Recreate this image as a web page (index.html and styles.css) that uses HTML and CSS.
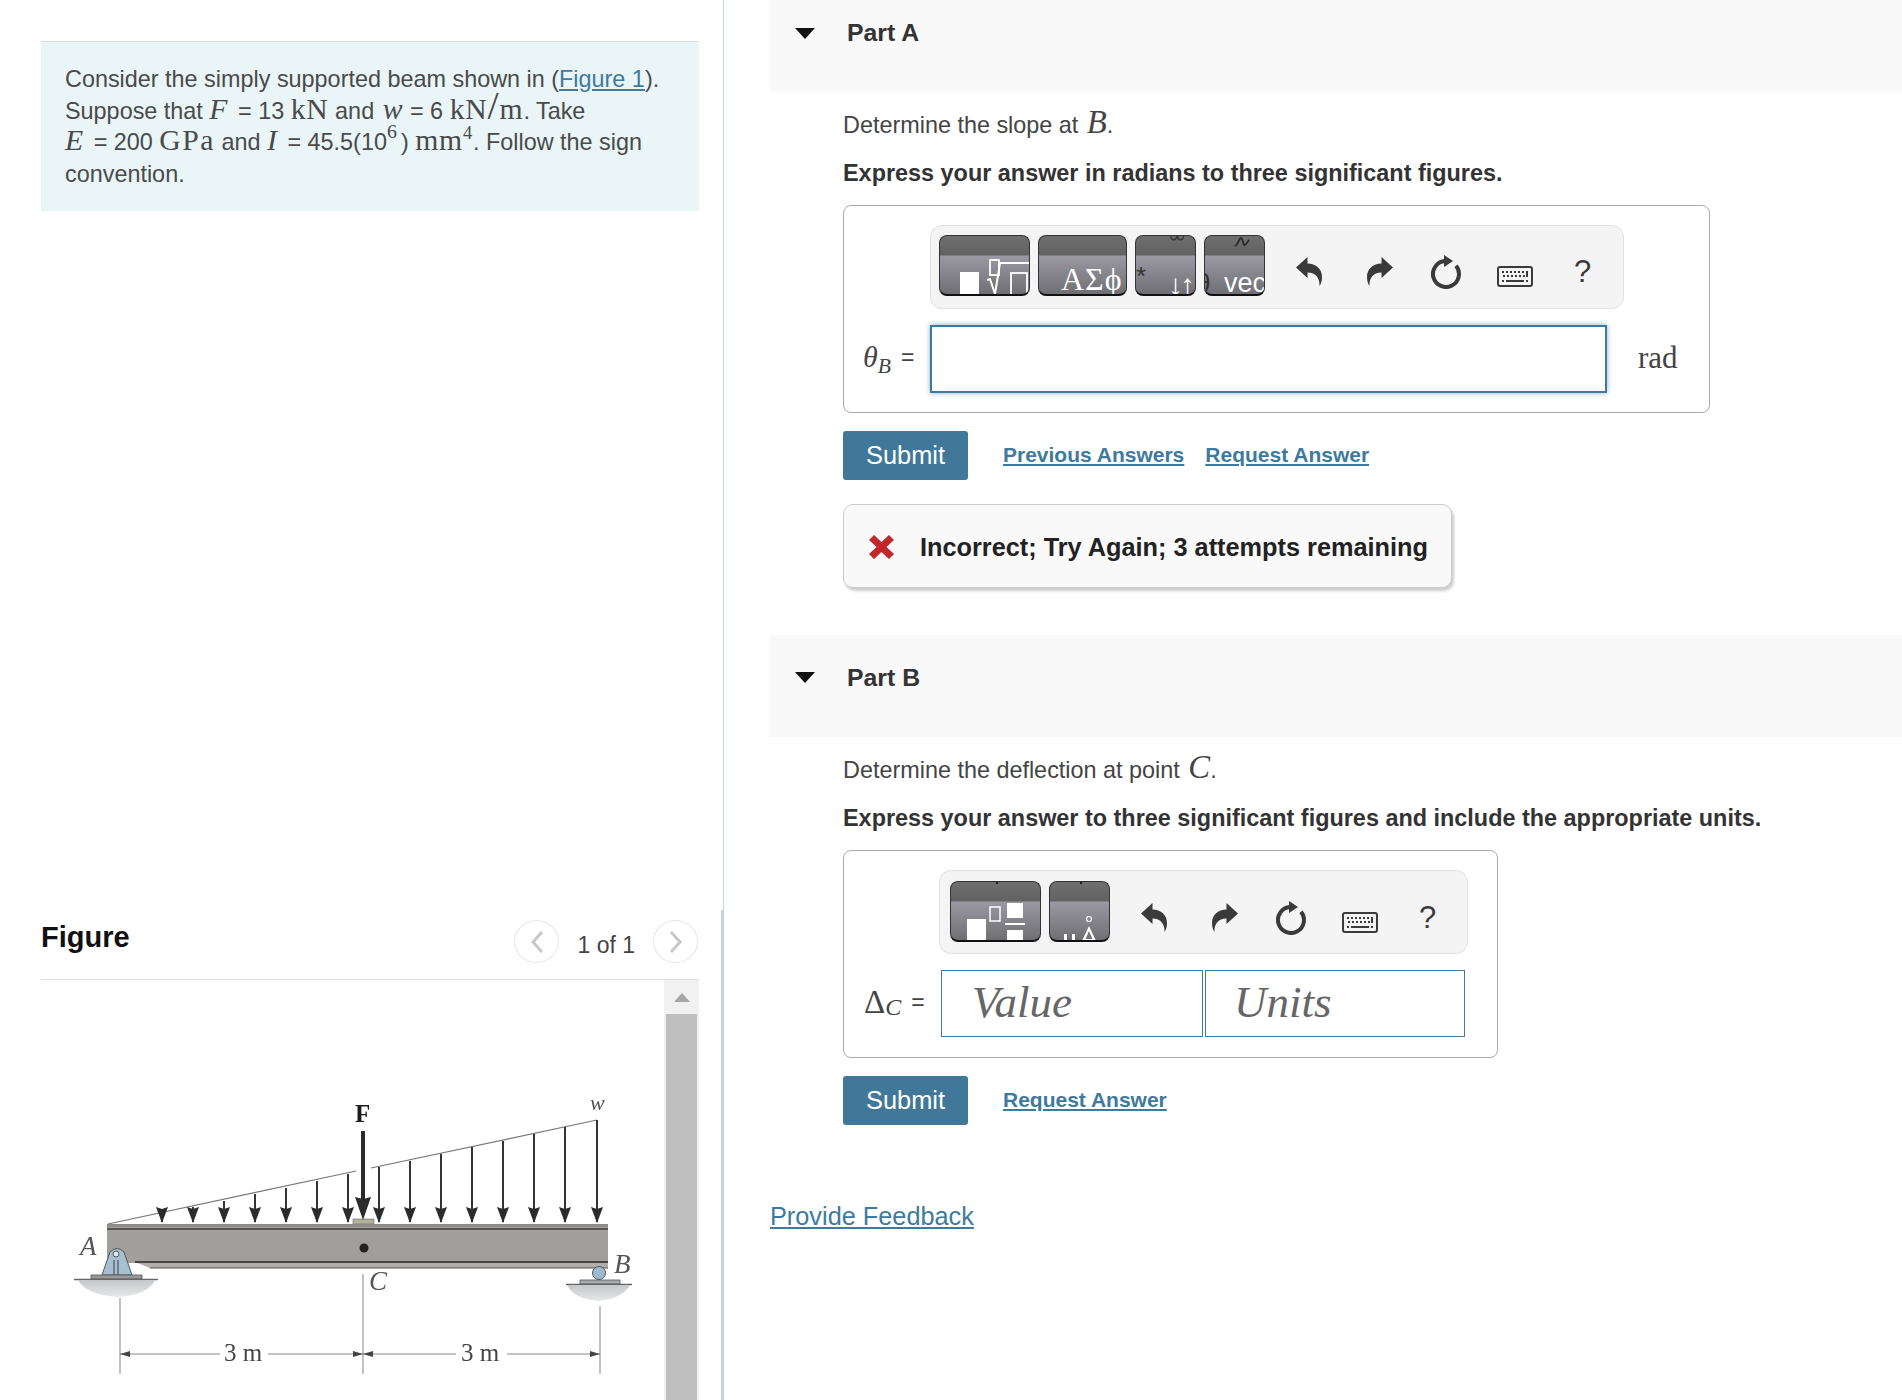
FILE: index.html
```html
<!DOCTYPE html>
<html lang="en">
<head>
<meta charset="utf-8">
<title>Beam problem</title>
<link rel="stylesheet" href="styles.css">
</head>
<body>
<svg class="defs" width="0" height="0" aria-hidden="true">
  <defs>
    <symbol id="i-undo" viewBox="0 0 26 29"><path d="M0 10.500 11.500 0v6.500C20 6.500 26 12 26 20c0 4-1 7-2.500 9C24 21.500 20 15.500 11.500 15.500V21Z"/></symbol>
    <symbol id="i-redo" viewBox="0 0 26 29"><path d="M26 10.500 14.500 0v6.500C6 6.500 0 12 0 20c0 4 1 7 2.500 9C2 21.500 6 15.500 14.500 15.500V21Z"/></symbol>
    <symbol id="i-reload" viewBox="0 0 31 34"><path d="M14 6A13 13 0 1 0 25 10.700" fill="none" stroke="currentColor" stroke-width="4"/><path d="M13 0 22 6 13 12Z"/></symbol>
    <symbol id="i-kbd" viewBox="0 0 36 21"><rect x="1" y="1" width="34" height="19" rx="2" fill="none" stroke="currentColor" stroke-width="2"/><path d="M5 5h2v2H5zM9 5h2v2H9zM13 5h2v2h-2zM17 5h2v2h-2zM21 5h2v2h-2zM25 5h2v2h-2zM29 5h2v6h-2zM6 9h2v2H6zM10 9h2v2h-2zM14 9h2v2h-2zM18 9h2v2h-2zM22 9h2v2h-2zM26 9h2v2h-2zM5 14h2v2H5zM9 14h18v2H9zM29 14h2v2h-2z"/></symbol>
  </defs>
</svg>
<div class="page">
  <aside class="left">
    <section class="intro">
      <p>Consider the simply supported beam shown in (<a href="#">Figure 1</a>).<br>
      Suppose that <i class="m mi gap">F</i> = 13 <span class="m up">kN</span> and <i class="m mi gap-s">w</i> = 6 <span class="m up">kN<span class="slash">/</span>m</span>. Take<br>
      <i class="m mi gap">E</i> = 200 <span class="m up up-w">GPa</span> and <i class="m mi gap">I</i> = 45.5(10<sup class="sup-m">6</sup>) <span class="m up">mm<sup>4</sup></span>. Follow the sign convention.</p>
    </section>
    <section class="figure">
      <header class="fig-head">
        <h2>Figure</h2>
        <nav class="pager">
          <span class="circle"><svg width="14" height="24" viewBox="0 0 14 24"><path d="M12 2 3 12l9 10" fill="none" stroke="#c8c8c8" stroke-width="3"/></svg></span>
          <span class="count">1 of 1</span>
          <span class="circle"><svg width="14" height="24" viewBox="0 0 14 24"><path d="M2 2l9 10-9 10" fill="none" stroke="#c8c8c8" stroke-width="3"/></svg></span>
        </nav>
      </header>
      <div class="fig-view">
        <div class="fig-canvas">
          <svg class="beam" width="623" height="420" viewBox="41 980 623 420">
            <defs>
              <marker id="ah" viewBox="0 0 12 16" refX="6" refY="15" markerWidth="12" markerHeight="16" orient="0" markerUnits="userSpaceOnUse"><path d="M0 0 6 2 12 0 6 16Z" fill="#2b2b2b"/></marker>
              <linearGradient id="gr" x1="0" y1="0" x2="0" y2="1"><stop offset="0" stop-color="#c4c8ca"/><stop offset="1" stop-color="#e6e8e8"/></linearGradient>
            </defs>
            <path d="M108 1224 356 1171M371 1168 597 1120" stroke="#777" stroke-width="1.200" fill="none"/>
            <g stroke="#333" stroke-width="2" fill="none">
              <path marker-end="url(#ah)" d="M162 1214V1222"/><path marker-end="url(#ah)" d="M193 1207V1222"/><path marker-end="url(#ah)" d="M224 1201V1222"/><path marker-end="url(#ah)" d="M255 1194V1222"/><path marker-end="url(#ah)" d="M286 1188V1222"/><path marker-end="url(#ah)" d="M317 1181V1222"/><path marker-end="url(#ah)" d="M348 1174V1222"/><path marker-end="url(#ah)" d="M379 1167V1222"/><path marker-end="url(#ah)" d="M410 1161V1222"/><path marker-end="url(#ah)" d="M441 1154V1222"/><path marker-end="url(#ah)" d="M472 1147V1222"/><path marker-end="url(#ah)" d="M503 1141V1222"/><path marker-end="url(#ah)" d="M534 1134V1222"/><path marker-end="url(#ah)" d="M565 1127V1222"/><path marker-end="url(#ah)" d="M597 1120V1222"/>
            </g>
            <rect x="353" y="1219" width="21" height="5" fill="#b5b09a" stroke="#666" stroke-width=".6"/>
            <path d="M363 1131V1200" stroke="#2b2b2b" stroke-width="4"/>
            <path d="M355 1197 363 1199 371 1197 363 1220Z" fill="#2b2b2b"/>
            <rect x="107" y="1224" width="501" height="39" fill="#a29e9c"/>
            <rect x="107" y="1224" width="501" height="3" fill="#8f8b88"/>
            <rect x="107" y="1228" width="501" height="2" fill="#5a5653"/>
            <path d="M135 1262 150 1268H608V1262Z" fill="#b0adab"/>
            <rect x="135" y="1261" width="473" height="2" fill="#4a4644"/>
            <path d="M150 1268H608" stroke="#555"/>
            <circle cx="364" cy="1248" r="4.500" fill="#222"/>
            <path d="M102 1275 110 1252Q117 1245 124 1252L132 1275Z" fill="#a6c0d2" stroke="#555"/>
            <circle cx="116" cy="1254" r="3" fill="#dde8ef" stroke="#555"/>
            <path d="M114 1260V1275M118 1260V1275" stroke="#556" stroke-width="1.200"/>
            <rect x="91" y="1275" width="51" height="4" fill="#999" stroke="#555" stroke-width=".8"/>
            <path d="M74 1279.500H158" stroke="#666" stroke-width="1.500"/>
            <path d="M78 1280H155Q148 1295 118 1297 86 1295 78 1280Z" fill="url(#gr)"/>
            <circle cx="599" cy="1273" r="6.500" fill="#9cbad0" stroke="#555"/>
            <rect x="580" y="1280" width="40" height="4" fill="#aaa" stroke="#555" stroke-width=".8"/>
            <path d="M566 1284.500H632" stroke="#666" stroke-width="1.500"/>
            <path d="M567 1285H630Q622 1299 598 1301 574 1299 567 1285Z" fill="url(#gr)"/>
            <path d="M120 1298V1374M363 1274V1374M600 1306V1374" stroke="#999" stroke-width="1.200"/>
            <path d="M120 1354H220M268 1354H363M363 1354H456M507 1354H600" stroke="#888" stroke-width="1.200"/>
            <path d="M120 1354 130 1351V1357ZM363 1354 353 1351V1357ZM363 1354 373 1351V1357ZM600 1354 590 1351V1357Z" fill="#444"/>
            <g class="lbl">
              <text x="224" y="1361">3 m</text>
              <text x="461" y="1361">3 m</text>
              <text x="80" y="1255" class="it">A</text>
              <text x="369" y="1290" class="it">C</text>
              <text x="614" y="1273" class="it">B</text>
              <text x="590" y="1110" class="it sm">w</text>
              <text x="355" y="1122" class="bf">F</text>
            </g>
          </svg>
        </div>
        <div class="scrollbar">
          <div class="scroll-up"><span class="tri"></span></div>
          <div class="thumb"></div>
        </div>
      </div>
    </section>
  </aside>
  <main class="right">
    <section class="part">
      <header class="part-head part-head-a"><span class="caret"></span><h3>Part A</h3></header>
      <div class="part-body">
        <p class="q">Determine the slope at <i class="m mi">B</i>.</p>
        <p class="ex">Express your answer in radians to three significant figures.</p>
        <div class="answer answer-a">
          <div class="toolbar toolbar-a">
            <span class="tbtn w91">
              <span class="g sq"></span>
              <svg class="g rad" width="44" height="38" viewBox="0 0 44 38"><path d="M0 22l3-1 5 15 5-31h31" fill="none" stroke="#fff" stroke-width="2"/><rect x="3" y="2" width="9" height="15" fill="none" stroke="#fff" stroke-width="1.800"/><rect x="24" y="15" width="16" height="24" fill="none" stroke="#fff" stroke-width="1.800"/></svg>
            </span>
            <span class="tbtn w89"><span class="g greek">ΑΣϕ</span></span>
            <span class="tbtn w61">
              <span class="g top-inf">∞</span>
              <span class="g star">*</span>
              <span class="g arrows">↓↑</span>
            </span>
            <span class="tbtn w61">
              <svg class="g top-wave" width="16" height="10" viewBox="0 0 16 10"><path d="M1 9C4 8 5 1 7 1S9 9 11 8 14 4 15 3" fill="none" stroke="#2a2a2a" stroke-width="1.800"/></svg>
              <span class="g theta">θ</span>
              <span class="g vec">vec</span>
            </span>
            <svg class="ic ic-undo"><use href="#i-undo"/></svg>
            <svg class="ic ic-redo"><use href="#i-redo"/></svg>
            <svg class="ic ic-reload"><use href="#i-reload"/></svg>
            <svg class="ic ic-kbd"><use href="#i-kbd"/></svg>
            <span class="help">?</span>
          </div>
          <div class="row">
            <span class="lab lab-a"><i class="m mi">θ<sub>B</sub></i><span class="eq">=</span></span>
            <div class="focus-input"></div>
            <span class="m unit">rad</span>
          </div>
        </div>
        <div class="actions">
          <button class="submit">Submit</button>
          <a class="act" href="#">Previous Answers</a>
          <a class="act" href="#">Request Answer</a>
        </div>
        <div class="fb">
          <svg width="25" height="24" viewBox="0 0 25 24"><path d="M5 0 12.500 7 20 0 25 5 17.500 12 25 19 20 24 12.500 17 5 24 0 19 7.500 12 0 5Z" fill="#c0282b"/></svg>
          <strong>Incorrect; Try Again; 3 attempts remaining</strong>
        </div>
      </div>
    </section>
    <section class="part part-b">
      <header class="part-head"><span class="caret"></span><h3>Part B</h3></header>
      <div class="part-body">
        <p class="q">Determine the deflection at point <i class="m mi">C</i>.</p>
        <p class="ex">Express your answer to three significant figures and include the appropriate units.</p>
        <div class="answer answer-b">
          <div class="toolbar toolbar-b">
            <span class="tbtn w91">
              <span class="tick"></span>
              <svg class="g frac" width="60" height="40" viewBox="0 0 60 40"><path d="M0 17h19v23H0zM40 1h16v15H40zM40 28h16v12H40zM38 21h20v2H38z" fill="#fff"/><rect x="23" y="5" width="10" height="14" fill="none" stroke="#fff" stroke-width="1.500"/></svg>
            </span>
            <span class="tbtn w61">
              <span class="tick"></span>
              <svg class="g ang" width="34" height="25" viewBox="0 0 34 25"><path d="M0 18h3v7H0zM8 18h3v7H8zM25 10 32 25H18ZM25 15l-3.500 8h7Z" fill="#fff" fill-rule="evenodd"/><circle cx="25" cy="3" r="2.500" fill="none" stroke="#fff" stroke-width="1.200"/></svg>
            </span>
            <svg class="ic ic-undo"><use href="#i-undo"/></svg>
            <svg class="ic ic-redo"><use href="#i-redo"/></svg>
            <svg class="ic ic-reload"><use href="#i-reload"/></svg>
            <svg class="ic ic-kbd"><use href="#i-kbd"/></svg>
            <span class="help">?</span>
          </div>
          <div class="row row-b">
            <span class="lab lab-b"><span class="delta">Δ</span><i class="delta-sub">C</i><span class="eq">=</span></span>
            <div class="field">Value</div>
            <div class="field field-2">Units</div>
          </div>
        </div>
        <div class="actions">
          <button class="submit">Submit</button>
          <a class="act" href="#">Request Answer</a>
        </div>
      </div>
    </section>
    <a class="feedback" href="#">Provide Feedback</a>
  </main>
</div>
</body>
</html>
```

FILE: styles.css
```css
* { box-sizing: border-box; }
html, body { margin: 0; padding: 0; background: #fff; }
body { font-family: "Liberation Sans", Arial, sans-serif; color: #444; height: 1400px; overflow: hidden; }
.defs { position: absolute; }
p, h2, h3 { margin: 0; }
a { color: #3e7a9d; }
.m { font-family: "Liberation Serif", "Times New Roman", serif; font-size: 1.27em; line-height: 0; }
.mi { font-style: italic; }
.gap { margin-right: 4px; }
.gap-s { margin-left: 2px; margin-right: 1px; }
.up { letter-spacing: .8px; }
.up-w { letter-spacing: 1.500px; }
.slash { font-size: 1.35em; font-weight: normal; line-height: 0; }
sup { font-size: .62em; line-height: 0; vertical-align: .62em; }
.sup-m { font-family: "Liberation Serif", serif; font-size: .85em; margin-right: 4px; }
sub { font-size: .72em; line-height: 0; vertical-align: -.3em; }

.page { display: flex; height: 1400px; }

.left { position: relative; width: 724px; flex: none; border-right: 1px solid #c5d3e2; padding: 41px 25px 0 41px; display: flex; flex-direction: column; }
.left::after { content: ""; position: absolute; right: 0; top: 910px; bottom: 0; width: 2px; background: #c5d3e2; }
.intro { width: 658px; height: 170px; background: #e9f5f6; border-top: 1px solid #ddd; padding: 22px 24px 0; font-size: 23.400px; line-height: 31.500px; color: #4a4a4a; }
.intro a { color: #3e7a9d; }

.figure { margin-top: 709px; width: 658px; }
.fig-head { display: flex; justify-content: space-between; align-items: flex-start; height: 60px; border-bottom: 1px solid #ddd; }
.fig-head h2 { font-size: 29px; line-height: 34px; color: #111; font-weight: bold; }
.pager { display: flex; align-items: flex-start; margin-right: 1px; }
.circle { width: 45px; height: 43px; border: 1px solid #e6e6e6; border-radius: 50%; display: flex; align-items: center; justify-content: center; }
.count { font-size: 23px; line-height: 30px; margin: 10px 18px 0; color: #444; }

.fig-view { display: flex; height: 420px; overflow: hidden; }
.fig-canvas { width: 623px; flex: none; filter: blur(.5px); }
.beam { display: block; }
.lbl text { font-family: "Liberation Serif", serif; font-size: 25px; fill: #444; }
.lbl .it { font-style: italic; font-size: 27px; fill: #555; }
.lbl .sm { font-size: 22px; }
.lbl .bf { font-weight: bold; font-size: 25px; fill: #1c1c1c; }
.scrollbar { width: 35px; background: #f1f1f1; padding: 0 2px; }
.scroll-up { height: 34px; display: flex; justify-content: center; padding-top: 13px; }
.tri { width: 0; height: 0; border-left: 8px solid transparent; border-right: 8px solid transparent; border-bottom: 9px solid #a6a6a6; }
.thumb { height: 400px; background: #bfbfbf; }

.right { flex: 1; padding-left: 46px; min-width: 0; }
.part-head { height: 102px; background: #f9f9f9; display: flex; align-items: center; padding-left: 25px; }
.part-head-a { height: 92px; }
.part-head h3 { font-size: 24.800px; font-weight: bold; color: #333; margin-left: 32px; margin-top: -17px; }
.caret { width: 0; height: 0; border-left: 10px solid transparent; border-right: 10px solid transparent; border-top: 11px solid #111; margin-top: -17px; }
.part-head-a h3, .part-head-a .caret { margin-top: -26px; }
.part-b { margin-top: 47px; }
.part-body { padding: 18px 0 0 73px; }
.q { font-size: 23.400px; line-height: 31px; color: #444; }
.q .m { font-size: 1.4em; margin-left: 2px; }
.ex { font-size: 23.420px; line-height: 31px; font-weight: bold; color: #333; margin-top: 17px; }

.answer { border: 1px solid #aaa; border-radius: 8px; margin-top: 16px; }
.answer-a { width: 867px; height: 208px; padding: 19px 0 0 86px; }
.answer-b { width: 655px; height: 208px; padding: 19px 0 0 95px; }
.toolbar { display: flex; align-items: flex-start; background: #f4f4f4; border: 1px solid #e2e2e2; border-radius: 12px; padding: 9px 8px; height: 84px; color: #3a3a3a; }
.toolbar-a { width: 694px; }
.toolbar-b { width: 529px; padding-left: 10px; padding-top: 10px; }
.tbtn { position: relative; display: block; flex: none; height: 61px; margin-right: 8px; border-radius: 8px; border: 1px solid #333; border-bottom-width: 2px; border-bottom-color: #111; overflow: hidden; background: linear-gradient(#6f6f6f 0, #626262 19px, #9a99a3 20px, #6f6f73 100%); }
.w91 { width: 91px; } .w89 { width: 89px; } .w61 { width: 61px; }
.g { position: absolute; color: #fff; }
.tick { position: absolute; left: 50%; top: 0; width: 2px; height: 2px; background: #222; }
.sq { left: 20px; bottom: -2px; width: 19px; height: 24px; background: #fff; }
.rad { left: 47px; top: 22px; }
.greek { left: 22px; bottom: -5px; font: 32px/40px "Liberation Serif", serif; letter-spacing: 1px; white-space: nowrap; }
.top-inf { left: 32px; top: -11px; color: #333; font: 22px/22px "DejaVu Sans", sans-serif; }
.star { left: 0; top: 27px; color: #333; font: 26px/26px "Liberation Sans", sans-serif; }
.arrows { left: 32px; bottom: -8px; font: 30px/34px "Liberation Serif", serif; letter-spacing: -3px; white-space: nowrap; }
.top-wave { left: 29px; top: 1px; }
.theta { left: -9px; top: 32px; color: #333; font: 26px/30px "Liberation Sans", sans-serif; }
.vec { left: 19px; bottom: -6px; font: 27px/34px "Liberation Sans", sans-serif; white-space: nowrap; }
.frac { left: 16px; top: 20px; }
.ang { left: 14px; top: 34px; }
.ic { flex: none; fill: currentColor; display: block; }
.ic-undo, .ic-redo { width: 26px; height: 29px; margin-top: 22px; }
.ic-undo { margin-left: 23px; }
.ic-redo { margin-left: 45px; }
.ic-reload { width: 31px; height: 34px; margin-left: 38px; margin-top: 20px; }
.ic-kbd { width: 36px; height: 21px; margin-left: 35px; margin-top: 31px; }
.help { margin-left: 41px; margin-top: 19px; font-size: 31px; line-height: 36px; color: #3a3a3a; }

.row { display: flex; align-items: center; margin-top: 16px; margin-left: -86px; }
.lab { color: #444; white-space: nowrap; display: flex; align-items: center; margin-top: -4px; }
.lab .m { font-size: 30px; line-height: 30px; }
.eq { font-size: 23px; line-height: 30px; }
.lab-a { width: 86px; padding-left: 19px; }
.lab-a .eq { margin-left: 10px; }
.focus-input { width: 677px; height: 68px; border: 2px solid #3f7a9e; box-shadow: 0 0 5px rgba(63,122,158,.6); background: #fff; }
.unit { font-size: 31px; line-height: 31px; margin-left: 31px; margin-top: -4px; color: #444; }
.row-b { margin-left: -95px; }
.lab-b { width: 97px; padding-left: 20px; }
.delta { font: 33px/38px "Liberation Serif", serif; }
.delta-sub { font: italic 24px/24px "Liberation Serif", serif; margin-top: 10px; }
.lab-b .eq { margin-left: 10px; }
.field { width: 262px; height: 67px; border: 1px solid #3f7a9e; font: italic 45px/63px "Liberation Serif", serif; color: #666; padding-left: 30px; }
.field-2 { margin-left: 2px; width: 260px; padding-left: 28px; }

.actions { display: flex; align-items: flex-start; margin-top: 18px; }
.submit { width: 125px; height: 49px; border: 0; border-radius: 3px; background: #41789a; color: #fff; font: 25.400px/49px "Liberation Sans", sans-serif; padding: 0; }
.act { font-size: 21px; font-weight: bold; line-height: 26px; margin-left: 21px; margin-top: 11px; }
.submit + .act { margin-left: 35px; }
.fb { display: flex; align-items: center; width: 609px; height: 84px; margin-top: 24px; background: #f9f9f9; border: 1px solid #ccc; border-radius: 10px; box-shadow: 2px 3px 3px rgba(0,0,0,.2); padding-left: 25px; }
.fb svg { margin-top: 1px; }
.fb strong { font-size: 25.300px; color: #222; margin-left: 26px; margin-top: 3px; white-space: nowrap; }
.feedback { display: block; width: max-content; font-size: 25.300px; line-height: 30px; margin-top: 76px; }
```
